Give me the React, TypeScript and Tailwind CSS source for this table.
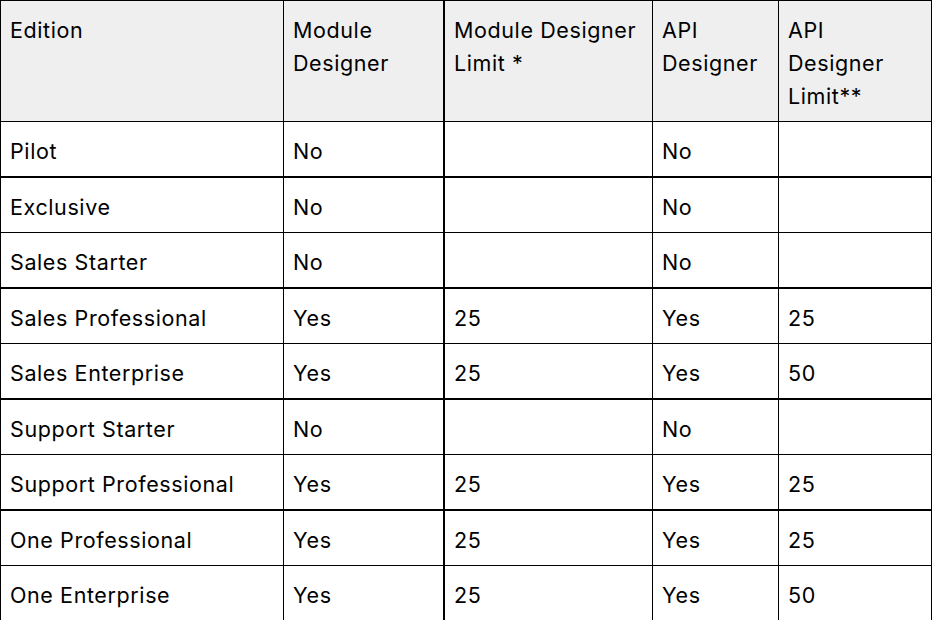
import { Fragment } from "react";

type Row = {
  edition: string;
  module: string;
  moduleLimit: string;
  api: string;
  apiLimit: string;
};

const rows: Row[] = [
  { edition: "Pilot", module: "No", moduleLimit: "", api: "No", apiLimit: "" },
  { edition: "Exclusive", module: "No", moduleLimit: "", api: "No", apiLimit: "" },
  { edition: "Sales Starter", module: "No", moduleLimit: "", api: "No", apiLimit: "" },
  { edition: "Sales Professional", module: "Yes", moduleLimit: "25", api: "Yes", apiLimit: "25" },
  { edition: "Sales Enterprise", module: "Yes", moduleLimit: "25", api: "Yes", apiLimit: "50" },
  { edition: "Support Starter", module: "No", moduleLimit: "", api: "No", apiLimit: "" },
  { edition: "Support Professional", module: "Yes", moduleLimit: "25", api: "Yes", apiLimit: "25" },
  { edition: "One Professional", module: "Yes", moduleLimit: "25", api: "Yes", apiLimit: "25" },
  { edition: "One Enterprise", module: "Yes", moduleLimit: "25", api: "Yes", apiLimit: "50" },
];

const headers = [
  ["Edition"],
  ["Module", "Designer"],
  ["Module Designer", "Limit *"],
  ["API", "Designer"],
  ["API", "Designer", "Limit**"],
];

export default function App() {
  return (
    <div className="w-[932px] h-[620px] overflow-hidden bg-white font-['Inter','Liberation_Sans',sans-serif] text-[21.5px] leading-[33px] tracking-[0.6px] text-black">
      <table className="w-[932px] table-fixed border-separate border-spacing-0">
        <colgroup>
          <col className="w-[284px]" />
          <col className="w-[161px]" />
          <col className="w-[208px]" />
          <col className="w-[126px]" />
          <col className="w-[153px]" />
        </colgroup>
        <thead>
          <tr className="bg-[#efefef]">
            {headers.map((lines, i) => (
              <th
                key={i}
                className={`h-[122px] border-t border-b border-r border-black pl-[9px] pr-1 pt-[13px] pb-[8px] text-left align-top font-normal whitespace-nowrap ${i === 0 ? "border-l" : ""} ${i === 1 ? "border-r-2" : ""}`}
              >
                {lines.map((l, j) => (
                  <Fragment key={j}>
                    {j > 0 && <br />}
                    {l}
                  </Fragment>
                ))}
              </th>
            ))}
          </tr>
        </thead>
        <tbody>
          {rows.map((r, idx) => {
            const thick = idx % 2 === 0;
            const cells = [r.edition, r.module, r.moduleLimit, r.api, r.apiLimit];
            return (
              <tr key={r.edition}>
                {cells.map((c, i) => (
                  <td
                    key={i}
                    className={`border-r border-black pl-[9px] pr-1 pt-[13px] pb-[8px] align-top whitespace-nowrap ${thick ? "border-b-2 h-[56px]" : "border-b h-[55px]"} ${i === 0 ? "border-l" : ""} ${i === 1 ? "border-r-2" : ""}`}
                  >
                    {c}
                  </td>
                ))}
              </tr>
            );
          })}
        </tbody>
      </table>
    </div>
  );
}
